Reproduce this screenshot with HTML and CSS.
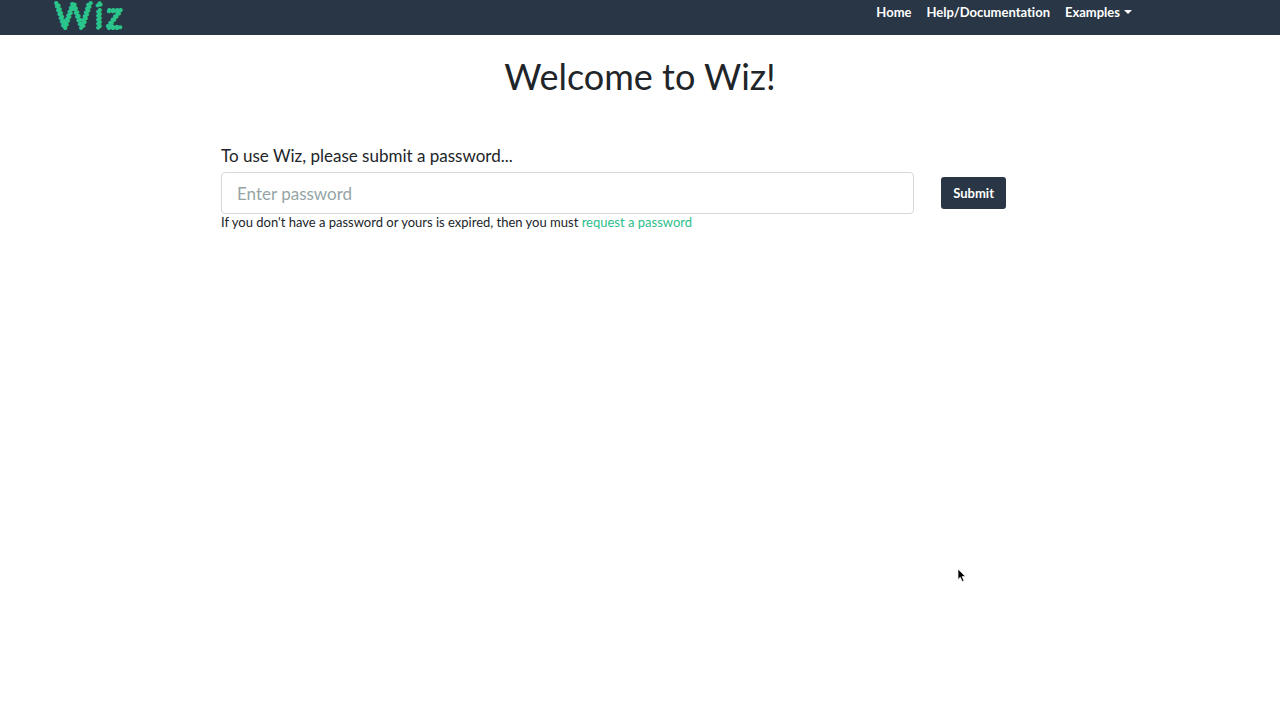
FILE: index.html
```html
<!DOCTYPE html>
<html lang="en">

<head>
    <meta charset="UTF-8">
    <meta name="viewport" content="width=device-width, initial-scale=1.0">
    <title>Wiz</title>
    <link rel="stylesheet" href="styles.css">
</head>

<body>

    <!-- Navigation bar -->
    <nav class="navbar">
        <a class="navbar-brand" href="#">
            <svg class="logo" width="76" height="35" viewBox="0 0 76 35">
                <text class="logo-text" x="5" y="28">W</text>
                <text class="logo-text" x="45" y="28">i</text>
                <text class="logo-text" x="56" y="28">z</text>
            </svg>
        </a>
        <div class="navbar-links">
            <a href="#">Home</a>
            <a href="#">Help/Documentation</a>
            <a class="dropdown-toggle" href="#">Examples</a>
        </div>
    </nav>

    <!-- Password form -->
    <main class="container">
        <h1>Welcome to Wiz!</h1>
        <form class="password-form">
            <label for="password">To use Wiz, please submit a password...</label>
            <div class="form-row">
                <input type="password" id="password" placeholder="Enter password">
                <button type="submit">Submit</button>
            </div>
            <p class="help">If you don't have a password or yours is expired, then you must <a href="#">request a password</a></p>
        </form>
    </main>

    <!-- Mouse pointer -->
    <svg class="pointer" width="10" height="15" viewBox="0 0 10 15">
        <path d="M1 1v10.500l2.300-2.200 1.900 4.200 1.800-.8-1.900-4.100h3.300z" fill="#000" stroke="#fff" stroke-width=".7"/>
    </svg>

</body>

</html>
```
FILE: styles.css
```css
* {
    box-sizing: border-box;
}

body {
    margin: 0;
    background: #fff;
    color: #212529;
    font-family: Lato, "Liberation Sans", sans-serif;
    font-variant-ligatures: none;
}

a {
    color: #18bc9c;
    text-decoration: none;
}

.navbar {
    display: flex;
    justify-content: space-between;
    height: 35px;
    padding: 0 148px 0 50px;
    background: #283645;
}

.logo {
    display: block;
    overflow: visible;
}

.logo-text {
    font-family: Lato, sans-serif;
    font-size: 36px;
    font-weight: 300;
    fill: #2ac58c;
    stroke: #2ac58c;
    stroke-width: 4px;
    stroke-linecap: round;
    stroke-dasharray: 0 4;
}

.navbar-links {
    display: flex;
    gap: 15px;
    padding-top: 3px;
}

.navbar-links a {
    color: #fff;
    font-size: 13px;
    font-weight: bold;
    line-height: 18px;
}

/* Arrow beside the menu name */
.dropdown-toggle::after {
    content: "";
    display: inline-block;
    margin-left: 4px;
    vertical-align: 3px;
    border-top: 4px solid;
    border-left: 4px solid transparent;
    border-right: 4px solid transparent;
}

.container {
    width: 100%;
    max-width: 838px;
    margin: 0 auto;
}

h1 {
    margin: 0;
    padding-top: 20px;
    font-size: 36px;
    font-weight: normal;
    line-height: 42px;
    text-align: center;
}

.password-form {
    margin-top: 46px;
}

label {
    display: block;
    font-size: 17px;
    line-height: 25px;
}

.form-row {
    display: flex;
    align-items: center;
    gap: 27px;
    margin-top: 4px;
    padding-right: 53px;
}

input {
    flex: 1;
    height: 42px;
    padding: 0 15px;
    border: 1px solid #d4d8dc;
    border-radius: 4px;
    font-family: inherit;
    font-size: 17px;
}

input::placeholder {
    color: #95a5a6;
}

button {
    height: 32px;
    padding: 0 12px;
    border: 0;
    border-radius: 3px;
    background: #283645;
    color: #fff;
    font-family: inherit;
    font-size: 13px;
    font-weight: bold;
}

.help {
    margin: 0;
    font-size: 13px;
    line-height: 17px;
}

.help a {
    color: #2bbd8c;
}

.pointer {
    position: absolute;
    top: 568px;
    left: 957px;
}
```
